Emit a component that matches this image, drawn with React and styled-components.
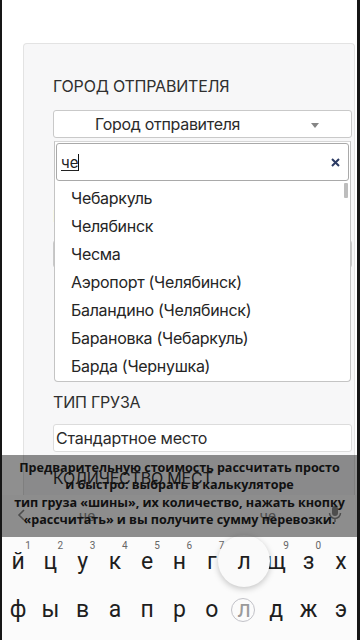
import React from 'react';
import styled, { createGlobalStyle } from 'styled-components';

const GlobalStyle = createGlobalStyle`
  html, body {
    margin: 0;
    padding: 0;
    background: #fff;
  }
  * { box-sizing: border-box; }
`;

const Screen = styled.div`
  width: 360px;
  height: 640px;
  position: relative;
  overflow: hidden;
  background: #fff;
  border-left: 2px solid #161616;
  border-right: 3px solid #161616;
  display: flex;
  flex-direction: column;
  font-family: Inter, "Noto Sans", sans-serif;
`;

const Page = styled.div`
  height: 495px;
  overflow: hidden;
  padding: 43px 2px 0 21px;
`;

const Card = styled.div`
  height: 100%;
  background: #f7f7f8;
  border: 1px solid #e3e3e3;
  border-bottom: none;
  border-radius: 4px 4px 0 0;
  padding: 32px 2px 0 29px;
`;

const Group = styled.div`
  position: relative;
  margin-top: ${p => p.$top || 0}px;
`;

const Label = styled.div`
  font-size: 16px;
  line-height: 20px;
  color: #2f2f2f;
  text-transform: uppercase;
  letter-spacing: -0.2px;
  margin-bottom: ${p => p.$gap || 14}px;
`;

const Select = styled.div`
  position: relative;
  height: 28px;
  background: #fff;
  border: 1px solid #c9c9c9;
  border-radius: 3px;
  display: flex;
  align-items: center;
  padding-left: 41px;
  font-size: 16px;
  color: #2b2b2b;
  letter-spacing: -0.3px;
`;

const Arrow = styled.span`
  position: absolute;
  right: 32px;
  top: 12px;
  width: 0;
  height: 0;
  border-left: 4px solid transparent;
  border-right: 4px solid transparent;
  border-top: 5px solid #858585;
`;

const Input = styled.div`
  height: 28px;
  background: #fff;
  border: 1px solid #dcdcdc;
  border-radius: 3px;
  display: flex;
  align-items: center;
  padding-left: 2px;
  font-size: 16px;
  color: #2b2b2b;
  letter-spacing: -0.2px;
`;

const Dropdown = styled.div`
  position: absolute;
  top: 100%;
  left: 1px;
  right: 1px;
  margin-top: 3px;
  height: 241px;
  background: #fff;
  border: 1px solid #c4c4c4;
  border-top-color: #d6d6d6;
  border-radius: 0 0 4px 4px;
  padding: 1px;
  z-index: 2;
`;

const Search = styled.div`
  height: 38px;
  border: 1px solid #a9a9a9;
  border-radius: 3px;
  display: flex;
  align-items: center;
  justify-content: space-between;
  padding: 0 8px 0 4px;
  font-size: 15px;
  color: #222;
`;

const Typed = styled.span`
  display: flex;
  align-items: center;
  text-decoration: underline;
  text-underline-offset: 2px;
`;

const Caret = styled.span`
  display: inline-block;
  width: 1px;
  height: 17px;
  background: #111;
`;

const List = styled.div`
  position: relative;
  padding-top: 3px;
`;

const Item = styled.div`
  height: 28px;
  display: flex;
  align-items: center;
  padding-left: 15px;
  font-size: 16px;
  color: #252525;
  letter-spacing: -0.3px;
`;

const Thumb = styled.span`
  position: absolute;
  right: 1px;
  top: 2px;
  width: 4px;
  height: 15px;
  background: #bdbdbd;
  border-radius: 1px;
`;

const Keyboard = styled.div`
  flex: 1;
  background: #fbfbfb;
  display: flex;
  flex-direction: column;
  position: relative;
`;

const Suggestions = styled.div`
  height: 42px;
  display: grid;
  grid-template-columns: 40px 1fr 1fr 1fr 44px;
  align-items: center;
  color: #8a8a8a;
  font-family: Roboto, sans-serif;
  font-size: 15px;
`;

const Suggest = styled.span`
  text-align: center;
`;

const KeyRow = styled.div`
  height: 48px;
  display: grid;
  grid-template-columns: repeat(11, 1fr);
  align-items: center;
`;

const Key = styled.div`
  position: relative;
  height: 100%;
  display: flex;
  align-items: center;
  justify-content: center;
  font-family: Roboto, sans-serif;
  font-size: 23px;
  color: ${p => (p.$dim ? '#9a9a9a' : '#1e1e1e')};
`;

const Num = styled.span`
  position: absolute;
  top: 3px;
  left: 50%;
  margin-left: 7px;
  font-size: 10px;
  color: #666;
`;

const Popup = styled.div`
  position: absolute;
  left: 50%;
  top: 50%;
  width: 52px;
  height: 52px;
  margin: -26px 0 0 -26px;
  border-radius: 50%;
  background: #fafafa;
  box-shadow: 0 2px 6px rgba(0, 0, 0, 0.22);
  display: flex;
  align-items: center;
  justify-content: center;
  color: #1e1e1e;
  z-index: 1;
`;

const Ring = styled.span`
  position: absolute;
  left: 50%;
  top: 50%;
  width: 24px;
  height: 24px;
  margin: -11px 0 0 -13px;
  border-radius: 50%;
  border: 1.5px solid #c2c2c8;
`;

const Caption = styled.div`
  position: absolute;
  left: 0;
  right: 0;
  top: 455px;
  height: 82px;
  padding-top: 4px;
  background: rgba(0, 0, 0, 0.44);
  color: #111;
  font-family: "Open Sans", sans-serif;
  font-weight: 700;
  font-size: 12.6px;
  line-height: 17.4px;
  letter-spacing: -0.05px;
  white-space: nowrap;
  text-align: center;
  z-index: 5;
`;

const cities = [
  'Чебаркуль',
  'Челябинск',
  'Чесма',
  'Аэропорт (Челябинск)',
  'Баландино (Челябинск)',
  'Барановка (Чебаркуль)',
  'Барда (Чернушка)',
];

const row1 = ['й', 'ц', 'у', 'к', 'е', 'н', 'г', 'л', 'щ', 'з', 'х'];
const nums = ['1', '2', '3', '4', '5', '6', '7', '8', '9', '0'];
const row2 = ['ф', 'ы', 'в', 'а', 'п', 'р', 'о', 'л', 'д', 'ж', 'э'];

export default function App() {
  return (
    <>
      <GlobalStyle />
      <Screen>
        <Page>
          <Card>
            <Group>
              <Label>Город отправителя</Label>
              <Select>
                Город отправителя
                <Arrow />
              </Select>
              <Dropdown>
                <Search>
                  <Typed>че<Caret /></Typed>
                  <svg width="9" height="9" viewBox="0 0 9 9">
                    <path d="M1 1L8 8M8 1L1 8" stroke="#2b3a63" strokeWidth="2" />
                  </svg>
                </Search>
                <List>
                  <Thumb />
                  {cities.map(c => <Item key={c}>{c}</Item>)}
                </List>
              </Dropdown>
            </Group>
            <Group $top={68}>
              <Label>Город получателя</Label>
              <Select>Город получателя<Arrow /></Select>
            </Group>
            <Group $top={124}>
              <Label $gap={12}>Тип груза</Label>
              <Input>Стандартное место</Input>
            </Group>
            <Group $top={16}>
              <Label>Количество мест</Label>
            </Group>
          </Card>
        </Page>
        <Keyboard>
          <Suggestions>
            <Suggest>
              <svg width="10" height="12" viewBox="0 0 10 12">
                <path d="M7 1L2 6l5 5" fill="none" stroke="#8a8a8a" strokeWidth="1.6" />
              </svg>
            </Suggest>
            <Suggest>че</Suggest>
            <Suggest />
            <Suggest>че</Suggest>
            <Suggest>
              <svg width="14" height="18" viewBox="0 0 14 18">
                <rect x="4" y="1" width="6" height="10" rx="3" fill="#8a8a8a" />
                <path d="M1.5 8a5.5 5.5 0 0 0 11 0M7 13.5V17" fill="none" stroke="#8a8a8a" strokeWidth="1.5" />
              </svg>
            </Suggest>
          </Suggestions>
          <KeyRow>
            {row1.map((k, i) => (
              <Key key={k + i}>
                {k}
                {nums[i] && <Num>{nums[i]}</Num>}
                {i === 7 && <Popup>л</Popup>}
              </Key>
            ))}
          </KeyRow>
          <KeyRow>
            {row2.map((k, i) => (
              <Key key={k + i} $dim={i === 7}>
                {i === 7 && <Ring />}
                {k}
              </Key>
            ))}
          </KeyRow>
        </Keyboard>
        <Caption>
          Предварительную стоимость рассчитать просто
          <br />
          и быстро: выбрать в калькуляторе
          <br />
          тип груза «шины», их количество, нажать кнопку
          <br />
          «рассчитать» и вы получите сумму перевозки.
        </Caption>
      </Screen>
    </>
  );
}
